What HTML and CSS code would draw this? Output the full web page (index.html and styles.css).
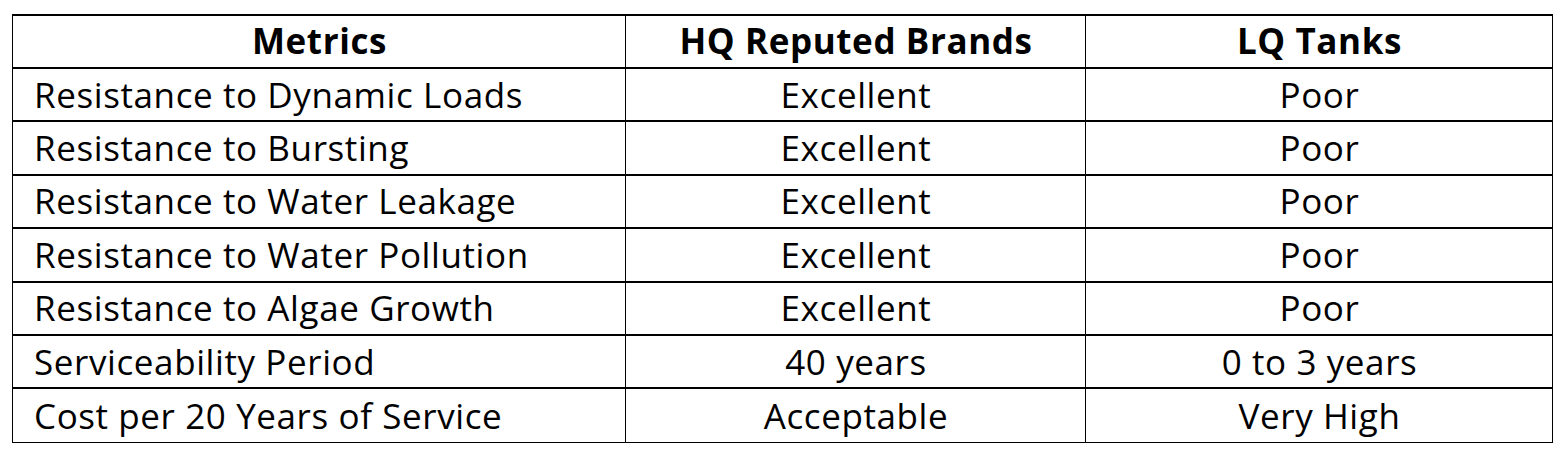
FILE: index.html
```html
<!DOCTYPE html>
<html>
<head>
<meta charset="utf-8">
<link rel="stylesheet" href="styles.css">
</head>
<body>
<table class="cmp">
  <colgroup>
    <col class="c1"><col class="c2"><col class="c3">
  </colgroup>
  <thead>
    <tr><th>Metrics</th><th>HQ Reputed Brands</th><th>LQ Tanks</th></tr>
  </thead>
  <tbody>
    <tr><td class="m">Resistance to Dynamic Loads</td><td>Excellent</td><td>Poor</td></tr>
    <tr><td class="m">Resistance to Bursting</td><td>Excellent</td><td>Poor</td></tr>
    <tr><td class="m">Resistance to Water Leakage</td><td>Excellent</td><td>Poor</td></tr>
    <tr><td class="m">Resistance to Water Pollution</td><td>Excellent</td><td>Poor</td></tr>
    <tr><td class="m">Resistance to Algae Growth</td><td>Excellent</td><td>Poor</td></tr>
    <tr><td class="m">Serviceability Period</td><td>40 years</td><td>0 to 3 years</td></tr>
    <tr><td class="m">Cost per 20 Years of Service</td><td>Acceptable</td><td>Very High</td></tr>
  </tbody>
</table>
</body>
</html>
```
FILE: styles.css
```css
html, body {
  margin: 0;
  padding: 0;
  background: #ffffff;
}
body {
  padding: 14px 0 0 12px;
}
.cmp {
  border-collapse: collapse;
  table-layout: fixed;
  width: 1540px;
  font-family: "Open Sans", "Liberation Sans", sans-serif;
  font-size: 35px;
  letter-spacing: 0.6px;
  font-variant-ligatures: none;
  color: #000;
}
.c1 { width: 613px; }
.c2 { width: 460px; }
.c3 { width: 467px; }
.cmp th, .cmp td {
  border-top: 2px solid #000;
  border-bottom: 2px solid #000;
  border-left: 1px solid #000;
  border-right: 1px solid #000;
  height: 50.4px;
  padding: 0 20px 1px 21px;
  text-align: center;
  vertical-align: middle;
  line-height: 1;
  white-space: nowrap;
}
.cmp th { font-weight: bold; height: 50px; padding-bottom: 2px; height: 49px; }
.cmp tbody tr:last-child td { border-bottom-width: 1px; height: 51.5px; }
.cmp td.m { text-align: left; }
```
